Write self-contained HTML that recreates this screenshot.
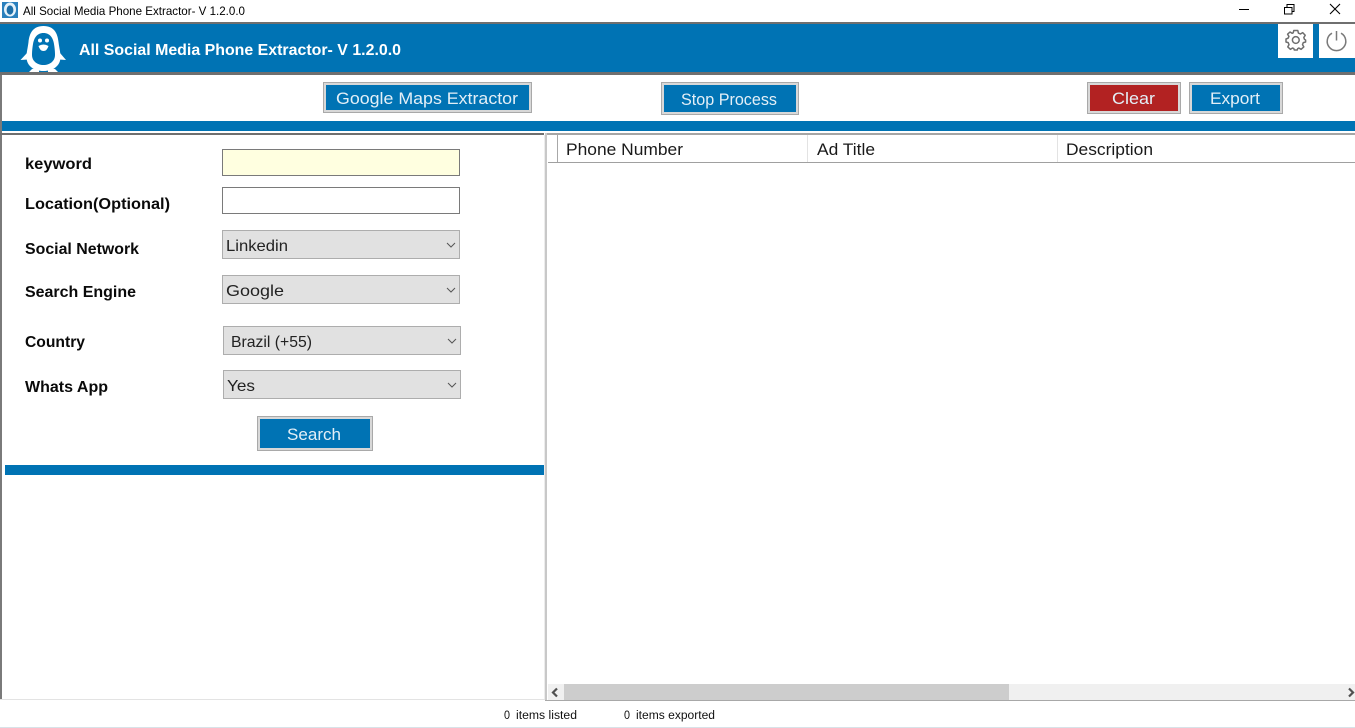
<!DOCTYPE html>
<html><head><meta charset="utf-8"><title>All Social Media Phone Extractor</title>
<style>
html,body{margin:0;padding:0;background:#fff;width:1355px;height:728px;overflow:hidden}
.a{position:absolute;box-sizing:border-box}
.b{background:#0073b4}
.btn{border:1px solid #a9a9a9;background:#0073b4;box-shadow:inset 0 0 0 2px #d8d8d8}
svg{position:absolute;left:0;top:0}
text{font-family:"Liberation Sans",sans-serif}
</style></head><body>
<div class="a" style="left:0;top:22px;width:1355px;height:2px;background:#6f6f6f"></div>
<div class="a b" style="left:0;top:24px;width:1355px;height:48px"></div>
<div class="a" style="left:0;top:72px;width:1355px;height:3px;background:#6f6f6f"></div>
<div class="a" style="left:0;top:75px;width:2px;height:624px;background:#7a7a7a"></div>
<div class="a b" style="left:2px;top:121px;width:1353px;height:10px"></div>
<div class="a" style="left:0;top:133px;width:544px;height:2px;background:#6f6f6f"></div>
<div class="a" style="left:547px;top:133px;width:808px;height:2px;background:#a5a5a5"></div>
<div class="a" style="left:544px;top:135px;width:1px;height:565px;background:#ececec"></div>
<div class="a" style="left:545px;top:133px;width:2px;height:568px;background:#c8c8c8"></div>
<div class="a" style="left:0;top:699px;width:545px;height:1px;background:#e3e3e3"></div>
<div class="a" style="left:545px;top:700px;width:810px;height:1px;background:#a8a8a8"></div>
<div class="a" style="left:0;top:727px;width:1355px;height:1px;background:#d8e2e8"></div>

<div class="a" style="left:548px;top:162px;width:807px;height:1px;background:#a0a0a0"></div>
<div class="a" style="left:557px;top:135px;width:1px;height:27px;background:#a8a8a8"></div>
<div class="a" style="left:807px;top:135px;width:1px;height:27px;background:#e3e3e3"></div>
<div class="a" style="left:1057px;top:135px;width:1px;height:27px;background:#e3e3e3"></div>

<div class="a" style="left:1278px;top:24px;width:35px;height:34px;background:#fff"></div>
<div class="a" style="left:1319px;top:24px;width:36px;height:34px;background:#fff"></div>

<div class="a btn" style="left:323px;top:82px;width:209px;height:31px"></div>
<div class="a btn" style="left:661px;top:82px;width:138px;height:33px"></div>
<div class="a btn" style="left:1087px;top:82px;width:94px;height:32px;background:#b22222"></div>
<div class="a btn" style="left:1189px;top:82px;width:94px;height:32px"></div>
<div class="a btn" style="left:257px;top:416px;width:116px;height:35px"></div>

<div class="a" style="left:222px;top:149px;width:238px;height:27px;background:#ffffe0;border:1px solid #7a7a7a"></div>
<div class="a" style="left:222px;top:187px;width:238px;height:27px;background:#fff;border:1px solid #7a7a7a"></div>
<div class="a" style="left:222px;top:230px;width:238px;height:29px;background:#e1e1e1;border:1px solid #adadad"></div>
<div class="a" style="left:222px;top:275px;width:238px;height:29px;background:#e1e1e1;border:1px solid #adadad"></div>
<div class="a" style="left:223px;top:326px;width:238px;height:29px;background:#e1e1e1;border:1px solid #adadad"></div>
<div class="a" style="left:223px;top:370px;width:238px;height:29px;background:#e1e1e1;border:1px solid #adadad"></div>

<div class="a b" style="left:5px;top:465px;width:539px;height:10px"></div>

<div class="a" style="left:548px;top:684px;width:807px;height:16px;background:#f0f0f0"></div>
<div class="a" style="left:564px;top:684px;width:445px;height:16px;background:#cdcdcd"></div>

<svg width="1355" height="728" viewBox="0 0 1355 728">
  <!-- small app icon -->
  <rect x="2" y="2" width="16" height="16" fill="#2a80bd"/>
  <ellipse cx="10" cy="9.5" rx="6" ry="7" fill="#e6f2fa"/>
  <ellipse cx="10" cy="10" rx="3.4" ry="4.6" fill="#1f6fa8"/>
  <text x="23" y="15" font-size="12" fill="#000" textLength="222" lengthAdjust="spacingAndGlyphs">All Social Media Phone Extractor- V 1.2.0.0</text>

  <!-- window controls -->
  <path d="M1239 9.5H1249" stroke="#000" stroke-width="1" fill="none"/>
  <path d="M1284.5 7.5H1292V14H1284.5ZM1287 7.5V4.5H1294V11.5H1292" stroke="#000" stroke-width="1" fill="none"/>
  <path d="M1330 4L1340 14M1340 4L1330 14" stroke="#000" stroke-width="1.1" fill="none"/>

  <!-- penguin -->
  <path d="M27 53L20.5 60L28 59.5ZM60 53L66 60L59 59.5Z" fill="#fff"/>
  <path d="M29 72L32 69L39 68L39 72ZM58 72L55 69L48 68L48 72Z" fill="#fff"/>
  <path d="M43.5 26C33 26 29.5 33 28.5 42C27.8 48 26.5 52 26.5 57C26.5 66 34 71 43.5 71C53 71 60.5 66 60.5 57C60.5 52 59.2 48 58.5 42C57.5 33 54 26 43.5 26Z" fill="#fff"/>
  <path d="M43.5 33C37 33 34 38 33 44C32.2 49 32 52 32 55C32 61 37 65 43.5 65C50 65 55 61 55 55C55 52 54.8 49 54 44C53 38 50 33 43.5 33Z" fill="#0073b4"/>
  <circle cx="40" cy="40.5" r="2" fill="#fff"/><circle cx="47" cy="40.5" r="2" fill="#fff"/>
  <path d="M38.5 46Q43.5 43 48.5 46Q47 51 43.5 51Q40 51 38.5 46Z" fill="#fff"/>

  <text x="79" y="55" font-size="16" font-weight="bold" fill="#fff" textLength="322" lengthAdjust="spacingAndGlyphs">All Social Media Phone Extractor- V 1.2.0.0</text>

  <!-- gear -->
  <g transform="translate(1295.8 40)" fill="none" stroke="#6e6e6e" stroke-width="1.5">
    <circle r="3.4"/>
    <path d="M-2 -9.5H2L2.6 -6.9L4.6 -6L6.9 -7.4L9.4 -4.7L8 -2.5L8.7 -0.6L9.8 0L9.8 2L7.5 2.6L6.7 4.6L8 6.9L5.3 9.3L3 8L1.9 8.6L1.5 10H-1.5L-2 8.6L-3.2 8L-5.4 9.3L-8 6.9L-6.8 4.6L-7.6 2.6L-9.8 2L-9.8 -1L-7.7 -1.8L-6.9 -3.6L-8.2 -5.8L-5.8 -8L-3.6 -6.7L-2.6 -7.2Z" stroke-linejoin="round"/>
  </g>
  <!-- power -->
  <path d="M1332 33.2A9.3 9.3 0 1 0 1341 33.2M1336.5 31V40.5" fill="none" stroke="#7a7a7a" stroke-width="1.5"/>

  <!-- buttons -->
  <g font-size="17" fill="#e3eff7">
    <text x="336" y="104" textLength="182" lengthAdjust="spacingAndGlyphs">Google Maps Extractor</text>
    <text x="681" y="105" textLength="96" lengthAdjust="spacingAndGlyphs">Stop Process</text>
    <text x="1112" y="104" textLength="43" lengthAdjust="spacingAndGlyphs">Clear</text>
    <text x="1210" y="104" textLength="50" lengthAdjust="spacingAndGlyphs">Export</text>
    <text x="287" y="440" textLength="54" lengthAdjust="spacingAndGlyphs">Search</text>
  </g>

  <!-- labels -->
  <g font-size="16" font-weight="bold" fill="#0a0a0a">
    <text x="25" y="169" textLength="67" lengthAdjust="spacingAndGlyphs">keyword</text>
    <text x="25" y="209" textLength="145" lengthAdjust="spacingAndGlyphs">Location(Optional)</text>
    <text x="25" y="254" textLength="114" lengthAdjust="spacingAndGlyphs">Social Network</text>
    <text x="25" y="297" textLength="111" lengthAdjust="spacingAndGlyphs">Search Engine</text>
    <text x="25" y="347" textLength="60" lengthAdjust="spacingAndGlyphs">Country</text>
    <text x="25" y="392" textLength="83" lengthAdjust="spacingAndGlyphs">Whats App</text>
  </g>

  <!-- select values -->
  <g font-size="16" fill="#222">
    <text x="226" y="251" textLength="62" lengthAdjust="spacingAndGlyphs">Linkedin</text>
    <text x="226" y="296" textLength="58" lengthAdjust="spacingAndGlyphs">Google</text>
    <text x="231" y="347" textLength="81" lengthAdjust="spacingAndGlyphs">Brazil (+55)</text>
    <text x="227" y="391" textLength="28" lengthAdjust="spacingAndGlyphs">Yes</text>
  </g>
  <g fill="none" stroke="#555" stroke-width="1">
    <path d="M447 243L451 247L455 243"/>
    <path d="M447 288L451 292L455 288"/>
    <path d="M448 339L452 343L456 339"/>
    <path d="M448 383L452 387L456 383"/>
  </g>

  <!-- table header -->
  <g font-size="17" fill="#1a1a1a">
    <text x="566" y="155" textLength="117" lengthAdjust="spacingAndGlyphs">Phone Number</text>
    <text x="817" y="155" textLength="58" lengthAdjust="spacingAndGlyphs">Ad Title</text>
    <text x="1066" y="155" textLength="87" lengthAdjust="spacingAndGlyphs">Description</text>
  </g>

  <!-- scroll arrows -->
  <path d="M557 688.5L553 692.5L557 696.5M1349 688.5L1353 692.5L1349 696.5" fill="none" stroke="#505050" stroke-width="2.2"/>

  <!-- status -->
  <g font-size="11.5" fill="#111">
    <text x="504" y="719" textLength="6" lengthAdjust="spacingAndGlyphs">0</text>
    <text x="516" y="719" textLength="61" lengthAdjust="spacingAndGlyphs">items listed</text>
    <text x="624" y="719" textLength="6" lengthAdjust="spacingAndGlyphs">0</text>
    <text x="636" y="719" textLength="79" lengthAdjust="spacingAndGlyphs">items exported</text>
  </g>
</svg>
</body></html>
